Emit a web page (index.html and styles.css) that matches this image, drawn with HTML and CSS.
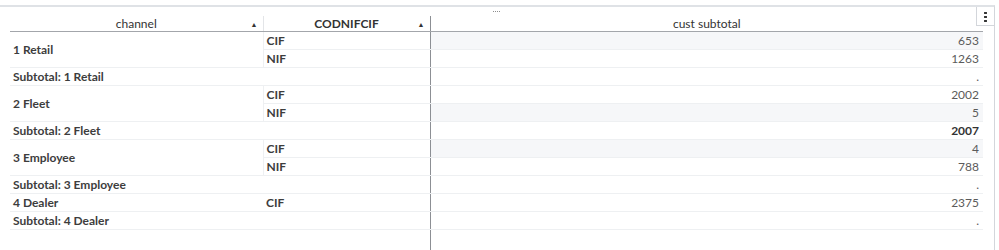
FILE: index.html
```html
<!DOCTYPE html>
<html>
<head>
<meta charset="utf-8">
<link rel="stylesheet" href="styles.css">
</head>
<body>
<div class="panel">
  <div class="grip"></div>
  <button class="menu" aria-label="menu"><span class="dots"></span></button>
  <table class="grid">
    <colgroup>
      <col class="c1"><col class="c2"><col class="c3">
    </colgroup>
    <thead>
      <tr>
        <th class="h1"><span class="hlabel">channel</span><span class="sort">▲</span></th>
        <th class="h2 frozen-end"><span class="hlabel">CODNIFCIF</span><span class="sort">▲</span></th>
        <th class="h3"><span class="hlabel">cust subtotal</span></th>
      </tr>
    </thead>
    <tbody>
      <tr class="shade">
        <td class="lbl" rowspan="2">1 Retail</td>
        <td class="sub split frozen-end">CIF</td>
        <td class="num">653</td>
      </tr>
      <tr>
        <td class="sub split frozen-end">NIF</td>
        <td class="num">1263</td>
      </tr>
      <tr>
        <td class="lbl frozen-end" colspan="2">Subtotal: 1 Retail</td>
        <td class="num">.</td>
      </tr>
      <tr>
        <td class="lbl" rowspan="2">2 Fleet</td>
        <td class="sub split frozen-end">CIF</td>
        <td class="num">2002</td>
      </tr>
      <tr class="shade">
        <td class="sub split frozen-end">NIF</td>
        <td class="num">5</td>
      </tr>
      <tr>
        <td class="lbl frozen-end" colspan="2">Subtotal: 2 Fleet</td>
        <td class="num strong">2007</td>
      </tr>
      <tr class="shade">
        <td class="lbl" rowspan="2">3 Employee</td>
        <td class="sub split frozen-end">CIF</td>
        <td class="num">4</td>
      </tr>
      <tr>
        <td class="sub split frozen-end">NIF</td>
        <td class="num">788</td>
      </tr>
      <tr>
        <td class="lbl frozen-end" colspan="2">Subtotal: 3 Employee</td>
        <td class="num">.</td>
      </tr>
      <tr>
        <td class="lbl">4 Dealer</td>
        <td class="sub frozen-end">CIF</td>
        <td class="num">2375</td>
      </tr>
      <tr>
        <td class="lbl frozen-end" colspan="2">Subtotal: 4 Dealer</td>
        <td class="num">.</td>
      </tr>
      <tr class="filler">
        <td class="frozen-end" colspan="2"></td>
        <td></td>
      </tr>
    </tbody>
  </table>
</div>
</body>
</html>
```

FILE: styles.css
```css
html, body {
  margin: 0;
  padding: 0;
  background: #ffffff;
}

body {
  font-family: Lato, "Open Sans", "Liberation Sans", sans-serif;
  font-size: 12px;
  color: #333;
}

.panel {
  position: relative;
  box-sizing: border-box;
  width: 995px;
  height: 245px;
  margin-top: 5px;
  border-top: 2px solid #dfe2e6;
  border-right: 1px solid #d3d6db;
  padding: 0 11px 0 10px;
  overflow: hidden;
}

.grip {
  width: 8px;
  height: 1px;
  margin: 4px auto 4px;
  background: repeating-linear-gradient(to right, #8d8d8d 0 1px, transparent 1px 2px);
}

.menu {
  position: absolute;
  top: -1px;
  right: -1px;
  width: 19px;
  height: 20px;
  box-sizing: border-box;
  border: 1px solid #d3d6db;
  background: #fff;
  padding: 0;
  display: flex;
  align-items: center;
  justify-content: center;
}

.dots {
  width: 3px;
  height: 11px;
  background: radial-gradient(circle, #333 1.1px, transparent 1.4px) 0 0 / 3px 4px repeat-y;
}

.grid {
  border-collapse: collapse;
  table-layout: fixed;
  width: 973px;
  margin-top: 2px;
}

.c1 { width: 253px; }
.c2 { width: 167px; }
.c3 { width: 553px; }

th {
  height: 15px;
  padding: 0;
  font-weight: normal;
  color: #333;
  border-bottom: 1px solid #a3a6ab;
  position: relative;
  vertical-align: middle;
  line-height: 15px;
}

.h1, .h2 {
  border-right: 1px solid #e3e5e8;
}

.hlabel {
  display: block;
  text-align: center;
}

.h2 .hlabel {
  font-weight: bold;
}

.sort {
  position: absolute;
  right: 5px;
  top: 0;
  font-size: 7px;
  color: #333;
  line-height: 17px;
}

td {
  height: 17px;
  padding: 0 3px;
  border-bottom: 1px solid #eef0f2;
  line-height: 17px;
  white-space: nowrap;
  vertical-align: middle;
}

.lbl {
  font-weight: bold;
  color: #3d3d3d;
}

.sub {
  font-weight: bold;
  color: #3d3d3d;
}

.split {
  border-left: 1px solid #eef0f2;
}

.num {
  text-align: right;
  color: #5b5b5b;
  padding-right: 4px;
}

.num.strong {
  font-weight: bold;
  color: #333;
}

tr.shade .num {
  background: #f6f7f9;
}

.frozen-end {
  border-right: 1px solid #8c8f94;
}

.filler td {
  height: 20px;
  border-bottom: none;
}
```
